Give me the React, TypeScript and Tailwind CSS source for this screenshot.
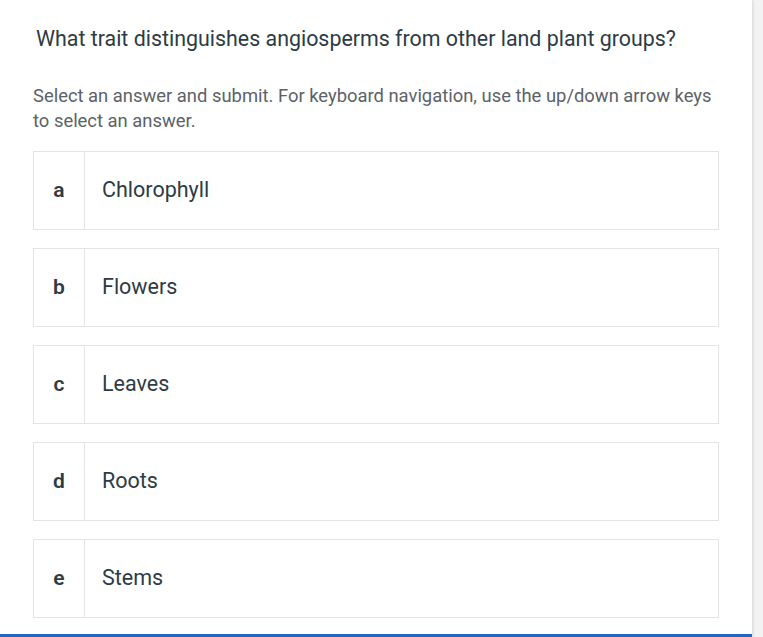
const OPTIONS = [
  { key: "a", label: "Chlorophyll" },
  { key: "b", label: "Flowers" },
  { key: "c", label: "Leaves" },
  { key: "d", label: "Roots" },
  { key: "e", label: "Stems" },
];

export default function App() {
  return (
    <div
      className="flex h-[637px] w-[763px] overflow-hidden bg-[#f3f3f3]"
      style={{ fontFamily: "Roboto, 'Noto Sans', sans-serif" }}
    >
      <div className="flex w-[752px] flex-col bg-white shadow-[1px_0_3px_rgba(0,0,0,0.12)]">
        <div className="min-h-0 flex-1 overflow-hidden pl-[33px] pr-[33px]">
          <h1 className="mt-[24px] whitespace-nowrap pl-[3px] text-[21.4px] leading-[30px] text-[#2d3b45]">
            What trait distinguishes angiosperms from other land plant groups?
          </h1>
          <p className="mt-[29px] text-[18.4px] leading-[25px] text-[#5b6268]">
            Select an answer and submit. For keyboard navigation, use the up/down arrow keys to select an answer.
          </p>
          <div className="mt-[18px] flex flex-col gap-[18px]">
            {OPTIONS.map((o) => (
              <div key={o.key} className="flex h-[79px] border border-[#e2e4e5]">
                <div className="flex w-[51px] items-center justify-center border-r border-[#e2e4e5] text-[21px] font-semibold text-[#2d3b45]">
                  {o.key}
                </div>
                <div className="flex items-center pl-[17px] text-[21.5px] text-[#2d3b45]">{o.label}</div>
              </div>
            ))}
          </div>
        </div>
        <div className="h-[3px] shrink-0 bg-[#2365c6]" />
      </div>
    </div>
  );
}
